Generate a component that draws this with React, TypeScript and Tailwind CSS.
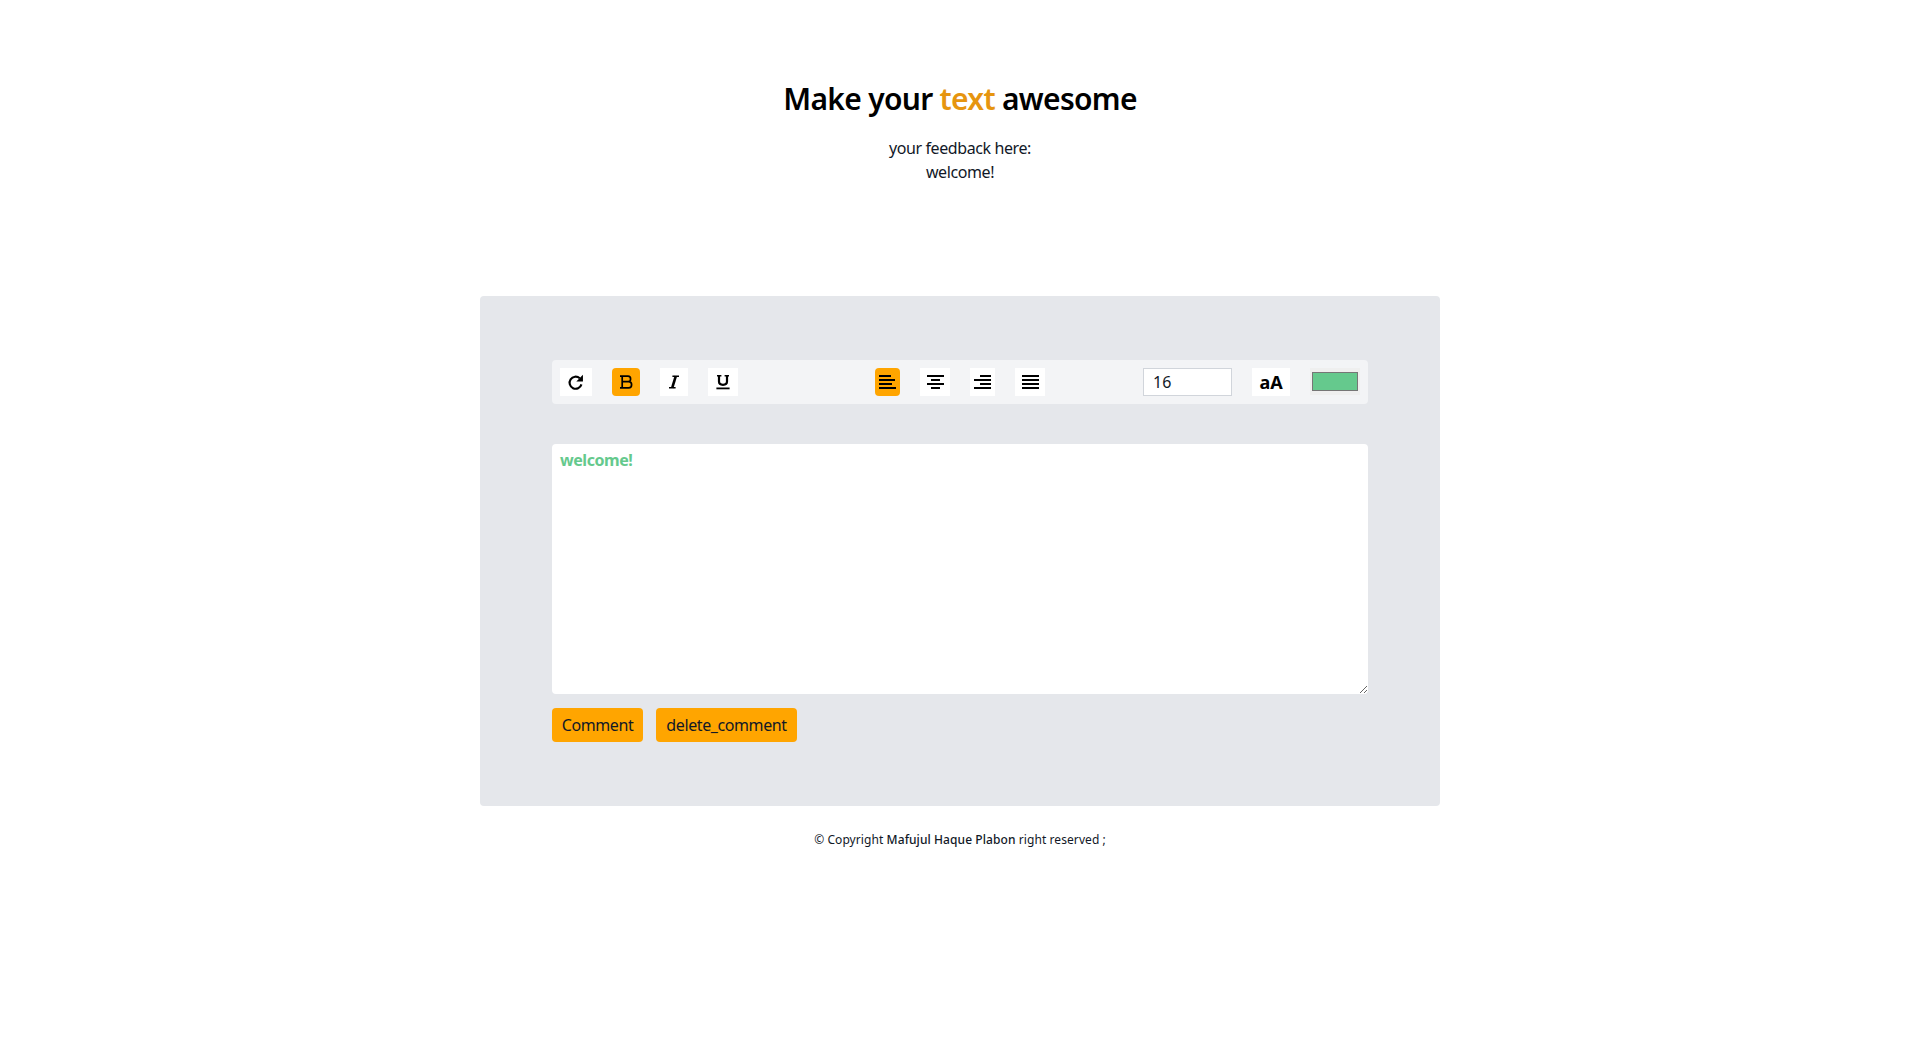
import { useState } from 'react';

const font = "font-['Noto_Sans',sans-serif]";

const RedoIcon = () => (
  <svg viewBox="0 0 16 16" className="-ml-0.5 h-[17px] w-[17px]" fill="none" stroke="black">
    <path d="M13.6 9.8A5.7 5.7 0 1 1 12 4" strokeWidth="2" />
    <path d="M15 .8V7H8.8Z" fill="black" stroke="none" />
  </svg>
);

const BoldIcon = () => (
  <svg viewBox="0 0 16 16" className="h-4 w-4" fill="none" stroke="black" strokeWidth="1.7">
    <path d="M2 2.2H10Q12.6 2.2 12.6 4.9T10 7.6H4.2M4.2 7.6H10.6Q13.6 7.6 13.6 10.7T10.6 13.8H2M4.2 2.2V13.8" />
  </svg>
);

const ItalicIcon = () => (
  <svg viewBox="0 0 16 16" className="h-4 w-4" fill="none" stroke="black">
    <path d="M6.4 2.2H13M3 13.8H9.6" strokeWidth="1.6" />
    <path d="M9.8 2.2L6.2 13.8" strokeWidth="2.6" />
  </svg>
);

const UnderlineIcon = () => (
  <svg viewBox="0 0 16 16" className="h-4 w-4" fill="none" stroke="black">
    <path d="M2 1.8H6.4M9.6 1.8H14" strokeWidth="1.5" />
    <path d="M4 1.8V7.6Q4 10.8 8 10.8T12 7.6V1.8" strokeWidth="2.2" />
    <path d="M1.4 14.4H14.6" strokeWidth="1.8" />
  </svg>
);

const AlignIcon = ({ lines }: { lines: [number, number][] }) => (
  <svg viewBox="0 0 17 16" className="h-4 w-[17px]" stroke="black" strokeWidth="2">
    {lines.map(([a, b], i) => (
      <path key={i} d={`M${a} ${2 + i * 4}H${b}`} />
    ))}
  </svg>
);

const App = () => {
  const [text, setText] = useState('welcome!');

  return (
    <div className={`${font} min-h-[1049px] bg-white text-[#111827]`}>
      <div className="flex flex-col items-center pt-[79px]">
        <h1 className="text-[30px] font-semibold leading-[40px] tracking-[-0.7px] text-black">
          Make your <span className="text-[#e6950f]">text</span> awesome
        </h1>
        <p className="mt-[17px] text-[16px] leading-6 tracking-[-0.4px]">your feedback here:</p>
        <p className="text-[16px] leading-6 tracking-[-0.4px]">{text}</p>
      </div>

      <div className="mx-auto mt-[112px] h-[510px] w-[960px] rounded bg-[#e5e7eb] px-[72px] pt-16">
        <div className="flex h-11 items-center rounded bg-[#f3f4f6]">
          <button className="ml-2 flex h-7 w-8 items-center justify-center bg-white"><RedoIcon /></button>
          <button className="ml-5 flex h-7 w-7 items-center justify-center rounded bg-[#ffa500]"><BoldIcon /></button>
          <button className="ml-5 flex h-7 w-7 items-center justify-center bg-white"><ItalicIcon /></button>
          <button className="ml-5 flex h-7 w-[30px] items-center justify-center bg-white"><UnderlineIcon /></button>

          <button className="ml-[137px] flex h-7 w-[25px] items-center justify-center rounded bg-[#ffa500]">
            <AlignIcon lines={[[0, 12], [0, 16], [0, 13], [0, 17]]} />
          </button>
          <button className="ml-5 flex h-7 w-[30px] items-center justify-center bg-white">
            <AlignIcon lines={[[0, 17], [4, 13], [0, 17], [4, 13]]} />
          </button>
          <button className="ml-5 flex h-7 w-[25px] items-center justify-center bg-white">
            <AlignIcon lines={[[6, 17], [0, 17], [6, 17], [0, 17]]} />
          </button>
          <button className="ml-5 flex h-7 w-[30px] items-center justify-center bg-white">
            <AlignIcon lines={[[0, 17], [0, 17], [0, 17], [0, 17]]} />
          </button>

          <input
            defaultValue="16"
            className="ml-[98px] h-7 w-[89px] border border-[#d1d5db] bg-white pl-[9px] text-[16px] outline-none"
          />
          <button className="ml-5 flex h-7 w-[38px] items-center justify-center bg-white text-[18px] font-bold text-black">aA</button>
          <div className="ml-5 mb-px flex h-[27px] w-[50px] items-center justify-center bg-[#efefef]">
            <div className="h-[19px] w-[46px] border border-[#767676] bg-[#65c98d]" />
          </div>
        </div>

        <textarea
          value={text}
          onChange={(e) => setText(e.target.value)}
          className="mt-10 block h-[250px] w-[816px] rounded bg-white px-2 pt-1 text-[16px] font-bold tracking-[-0.45px] text-[#65c98d] outline-none"
        />

        <div className="mt-[14px] flex gap-[13px]">
          <button className="h-[34px] w-[91px] rounded bg-[#ffa500] text-[16px] tracking-[-0.4px] text-[#111827]">Comment</button>
          <button className="h-[34px] w-[141px] rounded bg-[#ffa500] text-[16px] tracking-[-0.4px] text-[#111827]">delete_comment</button>
        </div>
      </div>

      <p className="mt-[26px] text-center text-[12px] leading-4 tracking-[0.08px]">
        © Copyright <span className="font-medium">Mafujul Haque Plabon</span> right reserved ;
      </p>
    </div>
  );
};

export default App;
